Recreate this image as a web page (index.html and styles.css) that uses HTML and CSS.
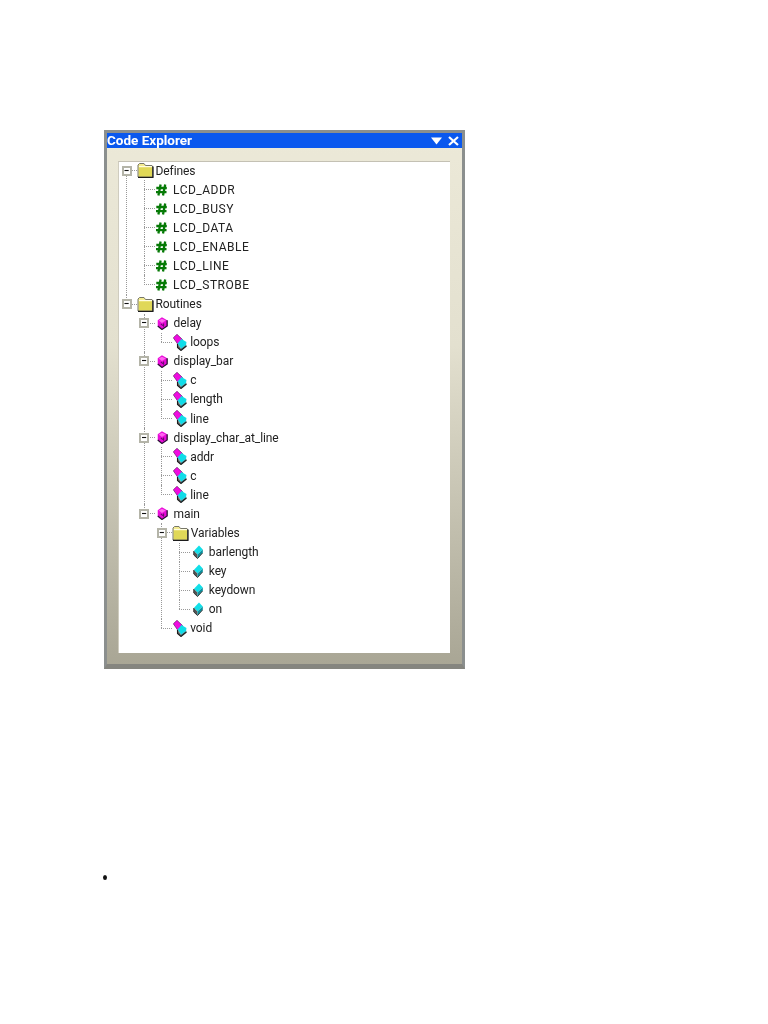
FILE: index.html
```html
<!DOCTYPE html>
<html lang="en">
<head>
<meta charset="utf-8">
<title>Code Explorer</title>
<link rel="stylesheet" href="styles.css">
</head>
<body>
<svg class="defs" width="0" height="0" aria-hidden="true">
  <symbol id="i-folder" viewBox="0 0 17 15">
    <path d="M1 14V2L2.500 .5h4.500L8.500 2.500H15l.5.5V14z" fill="#f4ec90" stroke="#77776a"/>
    <path d="M2 4.500h13V13.500H2z" fill="#e0d858"/>
    <path d="M2 3.500h13" stroke="#fffde0"/>
    <path d="M1 14.300h15.500M16 3.500v11" stroke="#1c1c1c" stroke-width="1.300"/>
  </symbol>
  <symbol id="i-hash" viewBox="0 0 11 12">
    <path d="M4.600 .5 2.400 11.500M9.200 .5 7 11.500M.3 4h10.500M0 8.200h10.500" fill="none" stroke="#067a06" stroke-width="2.300"/>
  </symbol>
  <symbol id="i-routine" viewBox="0 0 10 12">
    <path d="M4.500 .3 9.300 3v5.300L4.500 11.500.6 8.300V3z" fill="#e80ad8"/>
    <path d="M1.500 3.300 4.500 1.500 8 3.300 4.500 5.500z" fill="#ff66f0"/>
    <path d="M3.500 6.500 5.500 8M6 6v3" fill="none" stroke="#6a0a70"/>
    <path d="M.6 8.300 4.500 11.500 9.300 8.300V3" fill="none" stroke="#2a1035" stroke-width="1.200"/>
  </symbol>
  <symbol id="i-param" viewBox="0 0 14 17">
    <path d="M.3 3.800 4 .3 9.500 5.500 5 10.500z" fill="#f00ce0" stroke="#4a1050" stroke-width=".6"/>
    <path d="M4.500 9.500 8.500 5 13.500 8 13 11 8 14.500z" fill="#10dce8"/>
    <path d="M4.500 9.800 8 14.500V16.500L4.500 13.500z" fill="#6a6a6a"/>
    <path d="M8 14.500 13.300 10.800V12L8 16.500z" fill="#2a7a84"/>
    <path d="M4.500 10V13.500L8 16.500 13.500 12" fill="none" stroke="#1c1c1c" stroke-width="1.100"/>
  </symbol>
  <symbol id="i-var" viewBox="0 0 10 14">
    <path d="M6 .5 9.800 4.500 4.500 9.500.8 6z" fill="#12dfe8"/>
    <path d="M.8 6 4.500 9.500V13.500L.8 10z" fill="#555"/>
    <path d="M4.500 9.500 9.800 4.500V7.500L4.500 13.500z" fill="#0c8f9c"/>
    <path d="M.8 6V10L4.500 13.500 9.500 8" fill="none" stroke="#333"/>
  </symbol>
</svg>

<section class="explorer">
  <header class="titlebar">
    <h1 class="title">Code Explorer</h1>
    <div class="controls">
      <svg class="ctl" width="11" height="8" viewBox="0 0 11 8"><path d="M0 .5h11L5.500 7.500z" fill="#fff"/></svg>
      <svg class="ctl" width="11" height="10" viewBox="0 0 11 10"><path d="M1 1l9 8M10 1l-9 8" stroke="#fff" stroke-width="2.200" fill="none"/></svg>
    </div>
  </header>
  <div class="pane">
    <ul class="tree">
      <li>
        <div class="row"><span class="box">−</span><svg class="ic folder"><use href="#i-folder"/></svg><span class="lbl tight">Defines</span></div>
        <ul>
          <li><div class="row"><svg class="ic hash"><use href="#i-hash"/></svg><span class="lbl caps">LCD_ADDR</span></div></li>
          <li><div class="row"><svg class="ic hash"><use href="#i-hash"/></svg><span class="lbl caps">LCD_BUSY</span></div></li>
          <li><div class="row"><svg class="ic hash"><use href="#i-hash"/></svg><span class="lbl caps">LCD_DATA</span></div></li>
          <li><div class="row"><svg class="ic hash"><use href="#i-hash"/></svg><span class="lbl caps">LCD_ENABLE</span></div></li>
          <li><div class="row"><svg class="ic hash"><use href="#i-hash"/></svg><span class="lbl caps">LCD_LINE</span></div></li>
          <li><div class="row"><svg class="ic hash"><use href="#i-hash"/></svg><span class="lbl caps">LCD_STROBE</span></div></li>
        </ul>
      </li>
      <li>
        <div class="row"><span class="box">−</span><svg class="ic folder"><use href="#i-folder"/></svg><span class="lbl tight">Routines</span></div>
        <ul>
          <li>
            <div class="row"><span class="box">−</span><svg class="ic routine"><use href="#i-routine"/></svg><span class="lbl">delay</span></div>
            <ul>
              <li><div class="row"><svg class="ic param"><use href="#i-param"/></svg><span class="lbl tight">loops</span></div></li>
            </ul>
          </li>
          <li>
            <div class="row"><span class="box">−</span><svg class="ic routine"><use href="#i-routine"/></svg><span class="lbl">display_bar</span></div>
            <ul>
              <li><div class="row"><svg class="ic param"><use href="#i-param"/></svg><span class="lbl tight">c</span></div></li>
              <li><div class="row"><svg class="ic param"><use href="#i-param"/></svg><span class="lbl tight">length</span></div></li>
              <li><div class="row"><svg class="ic param"><use href="#i-param"/></svg><span class="lbl tight">line</span></div></li>
            </ul>
          </li>
          <li>
            <div class="row"><span class="box">−</span><svg class="ic routine"><use href="#i-routine"/></svg><span class="lbl">display_char_at_line</span></div>
            <ul>
              <li><div class="row"><svg class="ic param"><use href="#i-param"/></svg><span class="lbl tight">addr</span></div></li>
              <li><div class="row"><svg class="ic param"><use href="#i-param"/></svg><span class="lbl tight">c</span></div></li>
              <li><div class="row"><svg class="ic param"><use href="#i-param"/></svg><span class="lbl tight">line</span></div></li>
            </ul>
          </li>
          <li>
            <div class="row"><span class="box">−</span><svg class="ic routine"><use href="#i-routine"/></svg><span class="lbl">main</span></div>
            <ul>
              <li>
                <div class="row"><span class="box">−</span><svg class="ic folder"><use href="#i-folder"/></svg><span class="lbl tight">Variables</span></div>
                <ul>
                  <li><div class="row"><svg class="ic var"><use href="#i-var"/></svg><span class="lbl">barlength</span></div></li>
                  <li><div class="row"><svg class="ic var"><use href="#i-var"/></svg><span class="lbl">key</span></div></li>
                  <li><div class="row"><svg class="ic var"><use href="#i-var"/></svg><span class="lbl">keydown</span></div></li>
                  <li><div class="row"><svg class="ic var"><use href="#i-var"/></svg><span class="lbl">on</span></div></li>
                </ul>
              </li>
              <li><div class="row"><svg class="ic param"><use href="#i-param"/></svg><span class="lbl tight">void</span></div></li>
            </ul>
          </li>
        </ul>
      </li>
    </ul>
  </div>
</section>

<div class="bullet"></div>
</body>
</html>
```

FILE: styles.css
```css
* { box-sizing: border-box; }

html, body { margin: 0; background: #fff; }

body {
  padding: 130px 0 0 104px;
  font-family: Roboto, "Liberation Sans", Arial, sans-serif;
  color: #222;
}

.defs { position: absolute; }

.explorer {
  width: 361px;
  height: 539px;
  display: flex;
  flex-direction: column;
  border: 3px solid #8b8f8e;
  border-bottom: 5px solid #85857f;
  background: linear-gradient(to bottom, #ece9d8 0%, #e3e0cf 40%, #a9a695 100%);
}

.titlebar {
  height: 15px;
  flex: none;
  display: flex;
  align-items: center;
  justify-content: space-between;
  background: #0a58ee;
  color: #fff;
  padding: 0 3px 0 0;
}

.title {
  margin: 0;
  font-size: 13.5px;
  font-weight: bold;
  line-height: 15px;
  filter: blur(.3px);
}

.controls { display: flex; align-items: center; gap: 6px; }
.ctl { display: block; }

.pane {
  flex: none;
  width: 332px;
  height: 492px;
  margin: 13px 0 0 11px;
  background: #fff;
  border-top: 1px solid #c4c1b4;
  border-left: 1px solid #cfccbf;
  padding: 0 0 0 7px;
}

.tree, .tree ul { list-style: none; margin: 0; padding: 0; }
.tree { margin-top: -1px; filter: blur(.35px); }
.tree ul { margin-left: 17.6px; }

.tree li { position: relative; }

.tree li::before {
  content: "";
  position: absolute;
  left: 0;
  top: 0;
  bottom: 0;
  border-left: 1px dotted #999;
}

.tree li:last-child::before { bottom: auto; height: 9.5px; }

.tree li::after {
  content: "";
  position: absolute;
  left: 0;
  top: 9px;
  width: 11px;
  border-top: 1px dotted #999;
}

.tree > li:first-child::before { top: 9px; }

.row {
  position: relative;
  z-index: 1;
  height: 19.08px;
  display: flex;
  align-items: center;
  font-size: 12px;
}

.box {
  width: 10px;
  height: 10px;
  margin-left: -4.500px;
  flex: none;
  background: #fff;
  border: 2px solid #b4b4a8;
  font-size: 10px;
  font-weight: bold;
  line-height: 5px;
  text-align: center;
  color: #111;
}

.ic { flex: none; display: block; }

.folder { width: 17px; height: 15px; margin-left: 5px; }
.hash { width: 11px; height: 12px; margin-left: 12.500px; }
.routine { width: 11px; height: 13px; margin-left: 7.500px; }
.param { width: 14px; height: 17px; margin-left: 12px; }
.var { width: 10px; height: 14px; margin-left: 14px; }

.lbl { margin-left: 6px; white-space: nowrap; letter-spacing: -.08px; }
.lbl.tight { margin-left: 2px; }
.lbl.caps { letter-spacing: .5px; }

.param + .lbl.tight { margin-left: 3px; }
.routine + .lbl { margin-left: 6px; }

.bullet {
  width: 4px;
  height: 5px;
  margin-top: 206px;
  margin-left: -1px;
  border-radius: 50%;
  background: #111;
}
```
